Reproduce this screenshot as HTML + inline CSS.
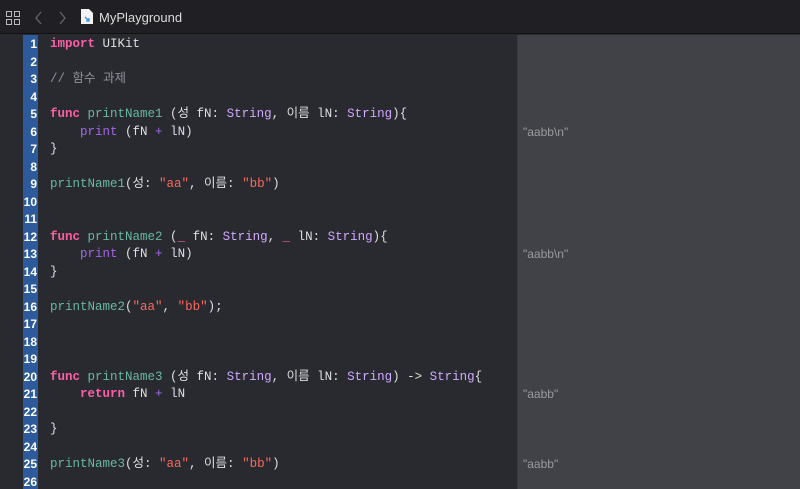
<!DOCTYPE html>
<html><head><meta charset="utf-8"><style>
*{margin:0;padding:0;box-sizing:border-box}
html,body{width:800px;height:489px;overflow:hidden}
body{background:#292a30;position:relative;font-family:"Liberation Mono","Noto Sans CJK KR",monospace}
.top{position:absolute;left:0;top:0;width:800px;height:34px;background:#1f1f24;border-bottom:1px solid #111}
.title{position:absolute;left:99px;top:10px;font:13px "Liberation Sans",sans-serif;color:#dcdcdc}
.gut{position:absolute;left:23px;top:35px;width:15px;height:454px;background:#2c5a9a}
.right{position:absolute;left:517px;top:35px;width:283px;height:454px;background:#414247;border-left:1px solid #3a3b40}
.ln{position:absolute;left:23px;width:15px;text-align:right;font:bold 12px "Liberation Sans",sans-serif;color:#fff;padding-right:1px}
.cl{position:absolute;left:50px;font-size:12.5px;color:#dfdfe0;white-space:pre;line-height:17px}
.k{color:#fc5fa3;font-weight:bold}.f{color:#67b7a4}.t{color:#d0a8ff}.s{color:#fc6a5d}.c{color:#8e9199}.p{color:#a167e6}
.r{position:absolute;left:523px;font:12px "Liberation Sans",sans-serif;color:#9a9a9e}
</style></head><body>
<div class="top">
<svg style="position:absolute;left:6px;top:11px" width="14" height="14" fill="none" stroke="#bbb" stroke-width="1"><rect x="0.5" y="0.5" width="5" height="5"/><rect x="8.5" y="0.5" width="5" height="5"/><rect x="0.5" y="8.5" width="5" height="5"/><rect x="8.5" y="8.5" width="5" height="5"/></svg>
<svg style="position:absolute;left:34px;top:11px" width="40" height="14" fill="none" stroke="#666" stroke-width="1.3"><path d="M7 1L2 7l5 6"/><path d="M26 1l5 6-5 6"/></svg>
<svg style="position:absolute;left:81px;top:9px" width="12" height="15"><path d="M0 0h8l4 4v11H0z" fill="#f2f2f2"/><path d="M4 8l4 4M8 9v3H5" stroke="#3a8ee6" stroke-width="1.3" fill="none"/></svg>
<div class="title">MyPlayground</div>
</div>
<div class="gut"></div>
<div class="right"></div>
<div id="c"></div>
<script>
var L=[
'<span class="k">import</span> UIKit','','<span class="c">// 함수 과제</span>','',
'<span class="k">func</span> <span class="f">printName1</span> (성 fN: <span class="t">String</span>, 이름 lN: <span class="t">String</span>){',
'    <span class="p">print</span> (fN <span class="p">+</span> lN)','}','',
'<span class="f">printName1</span>(성: <span class="s">"aa"</span>, 이름: <span class="s">"bb"</span>)','','',
'<span class="k">func</span> <span class="f">printName2</span> (<span class="k">_</span> fN: <span class="t">String</span>, <span class="k">_</span> lN: <span class="t">String</span>){',
'    <span class="p">print</span> (fN <span class="p">+</span> lN)','}','',
'<span class="f">printName2</span>(<span class="s">"aa"</span>, <span class="s">"bb"</span>);','','','',
'<span class="k">func</span> <span class="f">printName3</span> (성 fN: <span class="t">String</span>, 이름 lN: <span class="t">String</span>) -> <span class="t">String</span>{',
'    <span class="k">return</span> fN <span class="p">+</span> lN','','}','',
'<span class="f">printName3</span>(성: <span class="s">"aa"</span>, 이름: <span class="s">"bb"</span>)',''];
var h='';for(var i=0;i<L.length;i++){var y=35+i*17.52;
h+='<div class="ln" style="top:'+(y+2)+'px">'+(i+1)+'</div><div class="cl" style="top:'+(y+1)+'px">'+L[i]+'</div>';}
var R={6:'"aabb\\n"',13:'"aabb\\n"',21:'"aabb"',25:'"aabb"'};
for(var k in R){h+='<div class="r" style="top:'+(35+(k-1)*17.52+2)+'px">'+R[k]+'</div>';}
document.getElementById('c').innerHTML=h;
</script>
</body></html>
